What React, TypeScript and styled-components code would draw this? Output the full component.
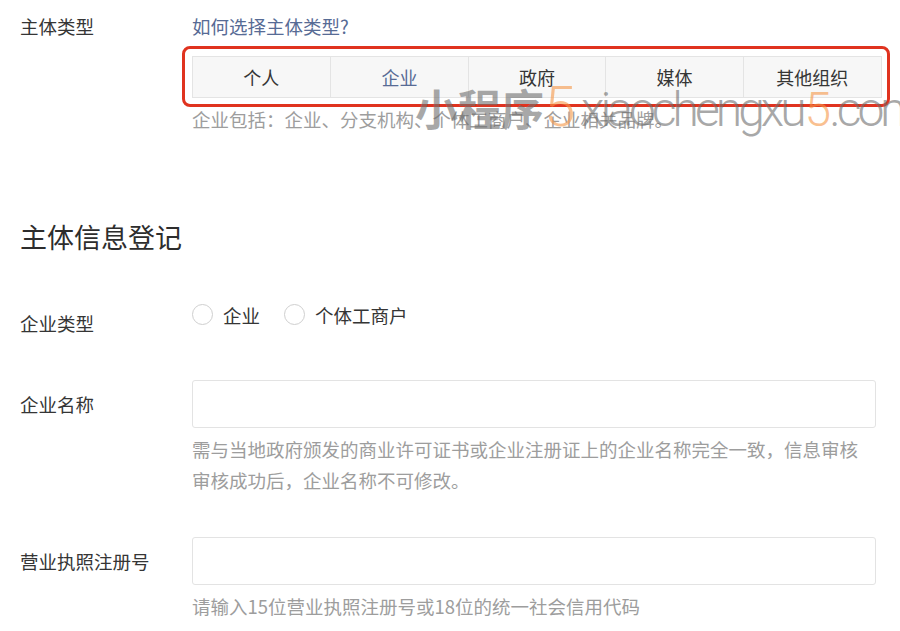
import React from "react";
import styled, { createGlobalStyle } from "styled-components";

const Global = createGlobalStyle`
  html, body { margin: 0; padding: 0; background: #ffffff; }
  body {
    font-family: "Noto Sans CJK SC", "Noto Sans", sans-serif;
    color: #353535;
    -webkit-font-smoothing: antialiased;
  }
`;

const Page = styled.div`
  position: relative;
  width: 900px;
  height: 631px;
  overflow: hidden;
  padding: 0 0 0 20px;
  box-sizing: border-box;
`;

const Row = styled.div<{ $top: number }>`
  display: grid;
  grid-template-columns: 172px 1fr;
  margin-top: ${(p) => p.$top}px;
`;

const Label = styled.div<{ $offset?: number }>`
  font-size: 18.5px;
  line-height: 26px;
  color: #353535;
  padding-top: ${(p) => p.$offset ?? 0}px;
  white-space: nowrap;
`;

const Field = styled.div`
  display: flex;
  flex-direction: column;
  align-items: flex-start;
`;

const Link = styled.a`
  font-size: 18.5px;
  line-height: 26px;
  color: #576b95;
  text-decoration: none;
`;

const Annotation = styled.div`
  margin: 7px 0 0 -10px;
  width: 708px;
  box-sizing: border-box;
  border: 3.5px solid #e0331f;
  border-radius: 8px;
  padding: 6.5px 5.5px 6px 6.5px;
`;

const Segmented = styled.div`
  display: grid;
  grid-template-columns: repeat(5, 1fr);
  height: 42px;
  box-sizing: border-box;
  border: 1px solid #e4e4e4;
  background: #f7f7f7;
`;

const Segment = styled.div<{ $active?: boolean }>`
  display: flex;
  align-items: center;
  justify-content: center;
  font-size: 18px;
  color: ${(p) => (p.$active ? "#576b95" : "#353535")};
  border-left: 1px solid #e4e4e4;
  &:first-child { border-left: none; }
`;

const Help = styled.div<{ $top: number }>`
  margin-top: ${(p) => p.$top}px;
  font-size: 18.5px;
  line-height: 31px;
  color: #9d9d9d;
  width: 690px;
`;

const Heading = styled.h2`
  margin: 83px 0 0 0;
  font-size: 27px;
  line-height: 38px;
  font-weight: 400;
  color: #2d2d2d;
`;

const Radios = styled.div`
  display: flex;
  align-items: center;
  gap: 24px;
  height: 26px;
`;

const RadioItem = styled.label`
  display: flex;
  align-items: center;
  gap: 10px;
  font-size: 18.5px;
  line-height: 26px;
  color: #353535;
`;

const Circle = styled.span`
  width: 21px;
  height: 21px;
  box-sizing: border-box;
  border-radius: 50%;
  border: 1px solid #cfcfcf;
  background: #fff;
`;

const Input = styled.div`
  width: 684px;
  height: 48px;
  box-sizing: border-box;
  border: 1px solid #e3e3e3;
  border-radius: 3px;
  background: #fff;
`;

const Watermark = styled.div`
  position: absolute;
  left: 415px;
  top: 74px;
  display: flex;
  align-items: baseline;
  white-space: nowrap;
  pointer-events: none;
  color: rgba(110, 110, 110, 0.6);
`;

const WmCn = styled.span`
  font-family: "Noto Sans CJK SC", sans-serif;
  font-weight: 700;
  font-size: 43px;
`;

const WmNum = styled.span<{ $size: number; $gap?: number }>`
  font-family: "Roboto", "Liberation Sans", sans-serif;
  font-weight: 300;
  font-size: ${(p) => p.$size}px;
  letter-spacing: -2px;
  margin-left: ${(p) => p.$gap ?? 0}px;
  color: rgba(245, 150, 70, 0.6);
`;

const WmLat = styled.span<{ $gap?: number }>`
  font-family: "Roboto", "Liberation Sans", sans-serif;
  font-weight: 300;
  font-size: 48px;
  letter-spacing: -4px;
  margin-left: ${(p) => p.$gap ?? 0}px;
`;

export default function App() {
  const segs = ["个人", "企业", "政府", "媒体", "其他组织"];
  return (
    <>
      <Global />
      <Page>
        <Row $top={13}>
          <Label>主体类型</Label>
          <Field>
            <Link href="#">如何选择主体类型?</Link>
            <Annotation>
              <Segmented>
                {segs.map((s) => (
                  <Segment key={s} $active={s === "企业"}>
                    {s}
                  </Segment>
                ))}
              </Segmented>
            </Annotation>
            <Help $top={-3}>企业包括：企业、分支机构、个体工商户、企业相关品牌。</Help>
          </Field>
        </Row>

        <Heading>主体信息登记</Heading>

        <Row $top={46}>
          <Label $offset={8}>企业类型</Label>
          <Field>
            <Radios>
              <RadioItem>
                <Circle />
                企业
              </RadioItem>
              <RadioItem>
                <Circle />
                个体工商户
              </RadioItem>
            </Radios>
          </Field>
        </Row>

        <Row $top={44}>
          <Label $offset={11}>企业名称</Label>
          <Field>
            <Input />
            <Help $top={6}>
              需与当地政府颁发的商业许可证书或企业注册证上的企业名称完全一致，信息审核
              <br />
              审核成功后，企业名称不可修改。
            </Help>
          </Field>
        </Row>

        <Row $top={41}>
          <Label $offset={11}>营业执照注册号</Label>
          <Field>
            <Input />
            <Help $top={6}>请输入15位营业执照注册号或18位的统一社会信用代码</Help>
          </Field>
        </Row>

        <Watermark>
          <WmCn>小程序</WmCn>
          <WmNum $size={56}>5</WmNum>
          <WmLat $gap={8}>xiaochengxu</WmLat>
          <WmNum $size={48} $gap={2}>5</WmNum>
          <WmLat>.com</WmLat>
        </Watermark>
      </Page>
    </>
  );
}
